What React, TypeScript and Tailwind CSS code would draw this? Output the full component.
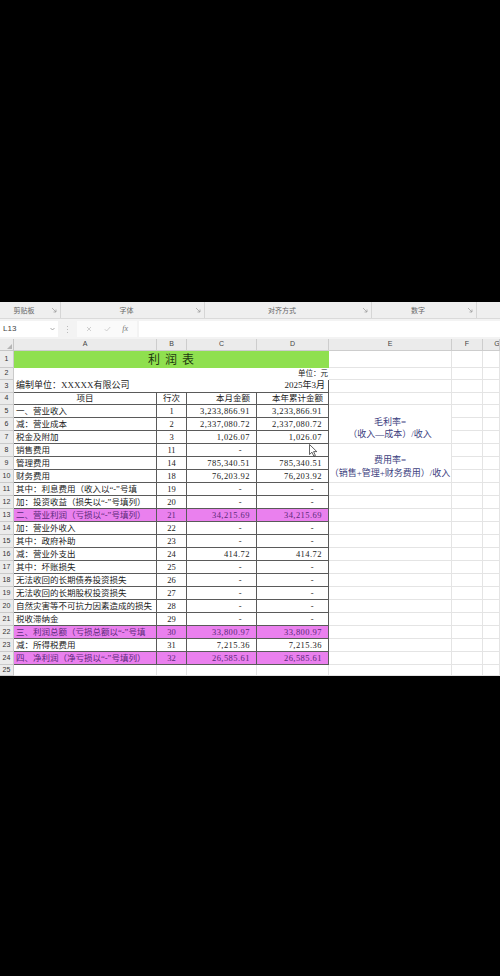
import React from "react";

type Row = [string, string, string, string, boolean];

const rows: Row[] = [
  ["一、营业收入", "1", "3,233,866.91", "3,233,866.91", false],
  ["减：营业成本", "2", "2,337,080.72", "2,337,080.72", false],
  ["税金及附加", "3", "1,026.07", "1,026.07", false],
  ["销售费用", "11", "-", "-", false],
  ["管理费用", "14", "785,340.51", "785,340.51", false],
  ["财务费用", "18", "76,203.92", "76,203.92", false],
  ["其中：利息费用（收入以“-”号填", "19", "-", "-", false],
  ["加：投资收益（损失以“-”号填列）", "20", "-", "-", false],
  ["二、营业利润（亏损以“-”号填列）", "21", "34,215.69", "34,215.69", true],
  ["加：营业外收入", "22", "-", "-", false],
  ["其中：政府补助", "23", "-", "-", false],
  ["减：营业外支出", "24", "414.72", "414.72", false],
  ["其中：坏账损失", "25", "-", "-", false],
  ["无法收回的长期债券投资损失", "26", "-", "-", false],
  ["无法收回的长期股权投资损失", "27", "-", "-", false],
  ["自然灾害等不可抗力因素造成的损失", "28", "-", "-", false],
  ["税收滞纳金", "29", "-", "-", false],
  ["三、利润总额（亏损总额以“-”号填", "30", "33,800.97", "33,800.97", true],
  ["减：所得税费用", "31", "7,215.36", "7,215.36", false],
  ["四、净利润（净亏损以“-”号填列）", "32", "26,585.61", "26,585.61", true],
];

const Launcher = () => (
  <svg width="6" height="6" viewBox="0 0 6 6" className="text-[#9a9a9a]">
    <path d="M1 1 L5 5 M5 2.5 V5 H2.5" fill="none" stroke="currentColor" strokeWidth="0.7" />
  </svg>
);

const RowHead = ({ n }: { n: number }) => (
  <div className="bg-[#ebebeb] border-r border-b border-[#cacaca] flex items-center justify-center text-[7px] text-[#333] font-['Liberation_Sans',sans-serif]">
    {n}
  </div>
);

const Grid = () => <div className="border-r border-b border-[#e4e4e4]" />;

const Num = ({ v, hl }: { v: string; hl: boolean }) => {
  const dash = v === "-";
  return (
    <div
      className={
        "border-r border-b border-[#5a5a5a] flex items-center justify-end whitespace-nowrap font-['Liberation_Serif',serif] text-[8.5px] tracking-[0.45px] " +
        (dash ? "pr-[14px] " : "pr-[6px] ") +
        (hl ? "bg-[#ea80ee] text-[#5b2a7a]" : "text-[#222]")
      }
    >
      {v}
    </div>
  );
};

export default function App() {
  return (
    <div className="w-[500px] h-[976px] bg-black flex flex-col font-['Liberation_Serif','Noto_Sans_CJK_SC',serif]">
      <div className="h-[302px] shrink-0" />
      <div className="h-[374px] shrink-0 bg-white flex flex-col relative overflow-hidden">
        {/* ribbon group labels */}
        <div className="h-[17px] shrink-0 bg-[#efefef] border-b border-[#dadada] flex text-[7px] text-[#666] font-['Noto_Sans_CJK_SC',sans-serif]">
          <div className="w-[61px] flex items-center border-r border-[#d6d6d6]">
            <span className="flex-1 text-center">剪贴板</span>
            <span className="w-[12px] flex justify-center"><Launcher /></span>
          </div>
          <div className="w-[144px] flex items-center border-r border-[#d6d6d6]">
            <span className="flex-1 text-center">字体</span>
            <span className="w-[12px] flex justify-center"><Launcher /></span>
          </div>
          <div className="w-[167px] flex items-center border-r border-[#d6d6d6]">
            <span className="flex-1 text-center">对齐方式</span>
            <span className="w-[12px] flex justify-center"><Launcher /></span>
          </div>
          <div className="w-[105px] flex items-center border-r border-[#d6d6d6]">
            <span className="flex-1 text-center">数字</span>
            <span className="w-[12px] flex justify-center"><Launcher /></span>
          </div>
          <div className="flex-1" />
        </div>
        {/* formula bar */}
        <div className="h-[20px] shrink-0 bg-[#f3f3f3] flex items-center py-[2px]">
          <div className="w-[58px] h-[16px] bg-white flex items-center justify-between pl-[3px] pr-[3px] text-[8px] text-[#444] font-['Liberation_Sans',sans-serif]">
            <span>L13</span>
            <svg width="5" height="4" viewBox="0 0 5 4">
              <path d="M0.5 1 L2.5 3 L4.5 1" fill="none" stroke="#888" strokeWidth="0.7" />
            </svg>
          </div>
          <div className="w-[19px] flex flex-col items-center gap-[2px]">
            <span className="w-[1px] h-[1px] bg-[#bbb]" />
            <span className="w-[1px] h-[1px] bg-[#bbb]" />
            <span className="w-[1px] h-[1px] bg-[#bbb]" />
          </div>
          <div className="w-[60px] h-[16px] bg-[#fafafa] flex items-center justify-around px-[3px]">
            <svg width="6" height="6" viewBox="0 0 6 6">
              <path d="M1 1 L5 5 M5 1 L1 5" stroke="#c4c4c4" strokeWidth="0.8" />
            </svg>
            <svg width="7" height="6" viewBox="0 0 7 6">
              <path d="M0.8 3.2 L2.6 5 L6.2 1" fill="none" stroke="#c4c4c4" strokeWidth="0.8" />
            </svg>
            <span className="text-[8px] italic text-[#777] font-['Liberation_Serif',serif]">fx</span>
          </div>
          <div className="w-[2px]" />
          <div className="flex-1 h-[16px] bg-white" />
        </div>
        {/* sheet */}
        <div className="grid shrink-0 grid-cols-[14px_143px_30px_70px_72px_123px_31px_17px] grid-rows-[12px_17px_12px_13px_12px_13px_13px_13px_13px_13px_13px_13px_13px_13px_13px_13px_13px_13px_13px_13px_13px_13px_13px_13px_13px_11px] text-[8.5px] text-[#222]">
          {/* column header */}
          <div className="bg-[#ebebeb] border-r border-b border-[#c6c6c6] flex items-end justify-end p-[1px]">
            <svg width="5" height="5" viewBox="0 0 5 5">
              <path d="M5 0 L5 5 L0 5 Z" fill="#b5b5b5" />
            </svg>
          </div>
          {["A", "B", "C", "D", "E", "F", "G"].map((c) => (
            <div
              key={c}
              className="bg-[#ebebeb] border-r border-b border-[#cdcdcd] flex items-center justify-center text-[7px] text-[#444] font-['Liberation_Sans',sans-serif] overflow-hidden"
            >
              <span className={c === "G" ? "pl-[12px]" : ""}>{c}</span>
            </div>
          ))}

          {/* row 1 */}
          <RowHead n={1} />
          <div className="col-span-4 bg-[#8fe04f] flex items-center justify-center text-[12px] text-[#1e3a10] tracking-[1px]">
            利 润 表
          </div>
          <Grid />
          <Grid />
          <Grid />

          {/* row 2 */}
          <RowHead n={2} />
          <div />
          <div />
          <div />
          <div className="flex items-center justify-end pr-[1px] text-[7.5px] whitespace-nowrap">单位：元</div>
          <Grid />
          <Grid />
          <Grid />

          {/* row 3 */}
          <RowHead n={3} />
          <div className="border-b border-[#5a5a5a] flex items-center pl-[2px] whitespace-nowrap text-[9px]">编制单位：XXXXX有限公司</div>
          <div className="border-b border-[#5a5a5a]" />
          <div className="border-b border-[#5a5a5a]" />
          <div className="border-b border-r border-[#5a5a5a] flex items-center justify-end pr-[3px] text-[9px] whitespace-nowrap">2025年3月</div>
          <Grid />
          <Grid />
          <Grid />

          {/* row 4 */}
          <RowHead n={4} />
          <div className="border-r border-b border-[#5a5a5a] flex items-center justify-center">项目</div>
          <div className="border-r border-b border-[#5a5a5a] flex items-center justify-center">行次</div>
          <div className="border-r border-b border-[#5a5a5a] flex items-center justify-end pr-[6px]">本月金额</div>
          <div className="border-r border-b border-[#5a5a5a] flex items-center justify-end pr-[5px]">本年累计金额</div>
          <Grid />
          <Grid />
          <Grid />

          {rows.map((r, i) => {
            const n = i + 5;
            const hl = r[4];
            return (
              <React.Fragment key={n}>
                <RowHead n={n} />
                <div
                  className={
                    "border-r border-b border-[#5a5a5a] flex items-center pl-[2px] whitespace-nowrap overflow-hidden " +
                    (hl ? "bg-[#ea80ee] text-[#5b2a7a]" : "")
                  }
                >
                  {r[0]}
                </div>
                <div
                  className={
                    "border-r border-b border-[#5a5a5a] flex items-center justify-center font-['Liberation_Serif',serif] text-[8.5px] " +
                    (hl ? "bg-[#ea80ee] text-[#5b2a7a]" : "")
                  }
                >
                  {r[1]}
                </div>
                <Num v={r[2]} hl={hl} />
                <Num v={r[3]} hl={hl} />
                {n === 5 && (
                  <div className="row-span-3 border-r border-b border-[#e4e4e4] flex flex-col items-center justify-center pt-[8px] text-[9px] text-[#3d4180] leading-[12px]">
                    <span>毛利率=</span>
                    <span>（收入—成本）/收入</span>
                  </div>
                )}
                {n === 8 && (
                  <div className="row-span-3 border-r border-b border-[#e4e4e4] flex flex-col items-center justify-center pt-[8px] text-[9px] text-[#3d4180] leading-[13px]">
                    <span>费用率=</span>
                    <span>（销售+管理+财务费用）/收入</span>
                  </div>
                )}
                {n > 10 && <Grid />}
                <Grid />
                <Grid />
              </React.Fragment>
            );
          })}

          {/* row 25 */}
          <RowHead n={25} />
          <Grid />
          <Grid />
          <Grid />
          <Grid />
          <Grid />
          <Grid />
          <Grid />
        </div>

        {/* mouse cursor */}
        <svg
          className="absolute left-[309px] top-[142px]"
          width="9"
          height="13"
          viewBox="0 0 9 13"
        >
          <path
            d="M0.5 0.5 L0.5 10.5 L3 8.2 L4.8 12.2 L6.4 11.5 L4.6 7.6 L7.8 7.6 Z"
            fill="#fff"
            stroke="#222"
            strokeWidth="0.7"
          />
        </svg>
      </div>
      <div className="flex-1" />
    </div>
  );
}
